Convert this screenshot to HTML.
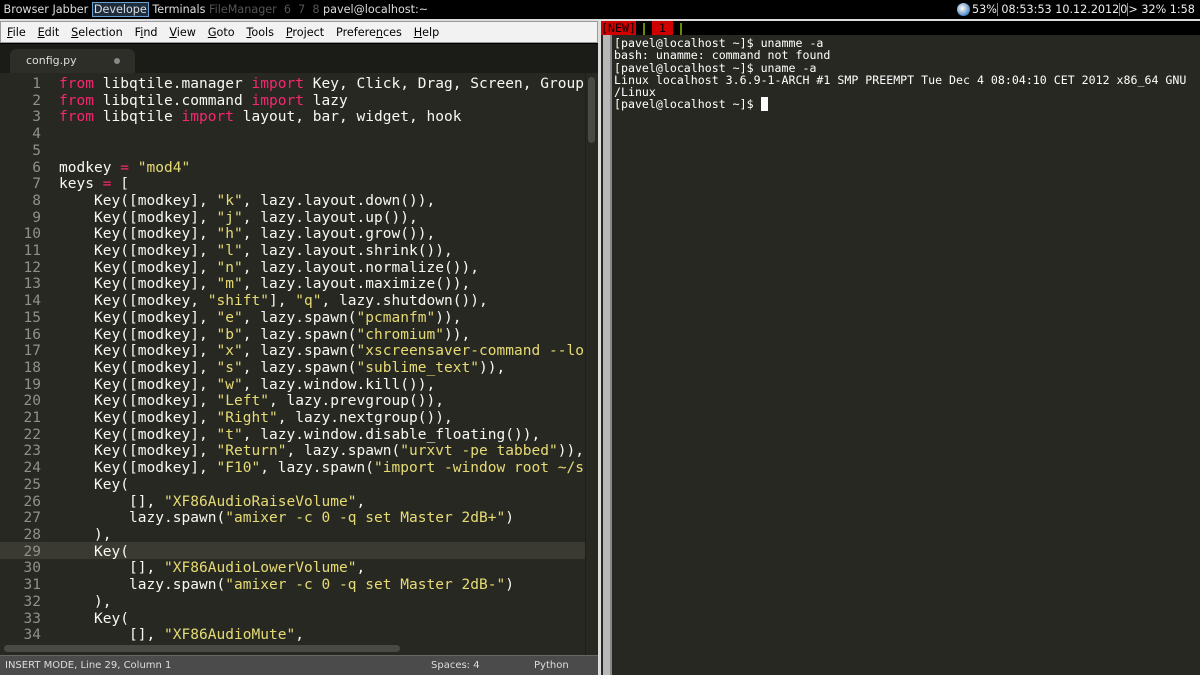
<!DOCTYPE html><html><head><style>
*{margin:0;padding:0;box-sizing:border-box}
body{width:1200px;height:675px;background:#000;position:relative;overflow:hidden;font-family:"DejaVu Sans",sans-serif}
.a{position:absolute}
#top{left:0;top:0;width:1200px;height:19px;background:#000;color:#ddd;font-size:11.2px;line-height:19px;white-space:pre}
#menu{left:0;top:21px;width:598px;height:22px;background:#f2f2f2;border:1px solid #999;font-size:11.2px;line-height:21px;color:#000}
#menu span{margin-left:6px;margin-right:2.3px}
#tabs{left:0;top:44px;width:598px;height:29px;background:#1b1b18}
#code{left:0;top:73px;width:598px;height:582px;background:#272822;overflow:hidden}
pre{font-family:"DejaVu Sans Mono",monospace;font-size:14.5px;line-height:16.7px;color:#f8f8f2}
.k{color:#f92672}.s{color:#e6db74}
#status{left:0;top:655px;width:598px;height:20px;background:#4b4b4b;color:#ddd;font-size:10px;line-height:19px;border-top:1px solid #666}
#term{left:601px;top:21px;width:599px;height:654px;background:#282822}
#term pre{font-size:11.6px;line-height:12.3px;color:#fff}
</style></head><body>
<div class="a" id="top"> Browser Jabber <span style="border:1px solid #6aa0d0;background:#1d2d3d;padding:0 1px">Develope</span> Terminals <span style="color:#555">FileManager  6  7  8</span> pavel@localhost:~</div>
<div class="a" style="left:957px;top:3px;width:13px;height:13px;border-radius:50%;background:radial-gradient(circle at 40% 40%,#fff 0,#bcd 30%,#48c 70%)"></div>
<div class="a" style="left:972px;top:0;color:#eee;font-size:11.2px;line-height:19px;white-space:pre">53%<span style="border-left:1px solid #888"> 08:53:53 10.12.2012</span><span style="border-left:1px solid #888">0</span><span style="border-left:1px solid #888">&gt; 32% 1:58</span></div>
<div class="a" style="left:598px;top:19px;width:3px;height:656px;background:#ddd"></div>
<div class="a" style="left:0;top:19px;width:1200px;height:2px;background:#ddd"></div>
<div class="a" id="menu"><span style="margin-left:6px"><u>F</u>ile</span> <span><u>E</u>dit</span> <span><u>S</u>election</span> <span>F<u>i</u>nd</span> <span><u>V</u>iew</span> <span><u>G</u>oto</span> <span><u>T</u>ools</span> <span><u>P</u>roject</span> <span>Prefere<u>n</u>ces</span> <span><u>H</u>elp</span></div>
<div class="a" id="tabs"><div class="a" style="left:10px;top:5px;width:125px;height:24px;background:#2d2e28;border-radius:6px 6px 0 0;color:#ddd;font-size:11px;line-height:24px;padding-left:16px">config.py<span style="position:absolute;left:104px;top:9px;width:6px;height:6px;border-radius:50%;background:#888"></span></div></div>
<div class="a" id="code">
<div class="a" style="left:0;top:469px;width:586px;height:17px;background:#3a3a33"></div>
<div class="a" style="left:4px;top:572px;width:396px;height:7px;background:#4a4a44;border-radius:4px"></div>
<pre class="a" style="left:0;top:3px;color:#8f908a;text-align:right;width:41px">1
2
3
4
5
6
7
8
9
10
11
12
13
14
15
16
17
18
19
20
21
22
23
24
25
26
27
28
29
30
31
32
33
34</pre>
<pre class="a" style="left:59px;top:3px;letter-spacing:0.02px"><span class="k">from</span> libqtile.manager <span class="k">import</span> Key, Click, Drag, Screen, Group
<span class="k">from</span> libqtile.command <span class="k">import</span> lazy
<span class="k">from</span> libqtile <span class="k">import</span> layout, bar, widget, hook


modkey <span class="k">=</span> <span class="s">"mod4"</span>
keys <span class="k">=</span> [
    Key([modkey], <span class="s">"k"</span>, lazy.layout.down()),
    Key([modkey], <span class="s">"j"</span>, lazy.layout.up()),
    Key([modkey], <span class="s">"h"</span>, lazy.layout.grow()),
    Key([modkey], <span class="s">"l"</span>, lazy.layout.shrink()),
    Key([modkey], <span class="s">"n"</span>, lazy.layout.normalize()),
    Key([modkey], <span class="s">"m"</span>, lazy.layout.maximize()),
    Key([modkey, <span class="s">"shift"</span>], <span class="s">"q"</span>, lazy.shutdown()),
    Key([modkey], <span class="s">"e"</span>, lazy.spawn(<span class="s">"pcmanfm"</span>)),
    Key([modkey], <span class="s">"b"</span>, lazy.spawn(<span class="s">"chromium"</span>)),
    Key([modkey], <span class="s">"x"</span>, lazy.spawn(<span class="s">"xscreensaver-command --lock"</span>)),
    Key([modkey], <span class="s">"s"</span>, lazy.spawn(<span class="s">"sublime_text"</span>)),
    Key([modkey], <span class="s">"w"</span>, lazy.window.kill()),
    Key([modkey], <span class="s">"Left"</span>, lazy.prevgroup()),
    Key([modkey], <span class="s">"Right"</span>, lazy.nextgroup()),
    Key([modkey], <span class="s">"t"</span>, lazy.window.disable_floating()),
    Key([modkey], <span class="s">"Return"</span>, lazy.spawn(<span class="s">"urxvt -pe tabbed"</span>)),
    Key([modkey], <span class="s">"F10"</span>, lazy.spawn(<span class="s">"import -window root ~/s"</span>)),
    Key(
        [], <span class="s">"XF86AudioRaiseVolume"</span>,
        lazy.spawn(<span class="s">"amixer -c 0 -q set Master 2dB+"</span>)
    ),
    Key(
        [], <span class="s">"XF86AudioLowerVolume"</span>,
        lazy.spawn(<span class="s">"amixer -c 0 -q set Master 2dB-"</span>)
    ),
    Key(
        [], <span class="s">"XF86AudioMute"</span>,</pre>
<div class="a" style="left:585px;top:0;width:13px;height:582px;background:#272822;border-left:1px solid #1e1e1a"></div>
<div class="a" style="left:588px;top:4px;width:7px;height:66px;background:#4a4a44;border-radius:4px"></div>
</div>
<div class="a" id="status"><span style="position:absolute;left:5px">INSERT MODE, Line 29, Column 1</span><span style="position:absolute;left:431px">Spaces: 4</span><span style="position:absolute;left:534px">Python</span></div>
<div class="a" id="term">
<div class="a" style="left:0;top:0;width:599px;height:14px;background:#000;font-family:'DejaVu Sans Mono',monospace;font-size:11.6px;line-height:14px;white-space:pre;color:#000"><span style="background:#d00000">[NEW]</span><span style="background:#000"> </span><span style="background:#6a8a00;display:inline-block;width:2px;height:12px;vertical-align:middle"></span><span style="background:#000"> </span><span style="background:#d00000"> 1 </span><span style="background:#000"> </span><span style="background:#6a8a00;display:inline-block;width:2px;height:12px;vertical-align:middle"></span></div>
<div class="a" style="left:2px;top:14px;width:9px;height:640px;background:#b8b8b8;border-right:2px solid #888"></div>
<pre class="a" style="left:13px;top:16px">[pavel@localhost ~]$ unamme -a
bash: unamme: command not found
[pavel@localhost ~]$ uname -a
Linux localhost 3.6.9-1-ARCH #1 SMP PREEMPT Tue Dec 4 08:04:10 CET 2012 x86_64 GNU
/Linux
[pavel@localhost ~]$ <span style="background:#fff">&nbsp;</span></pre>
</div>
</body></html>
